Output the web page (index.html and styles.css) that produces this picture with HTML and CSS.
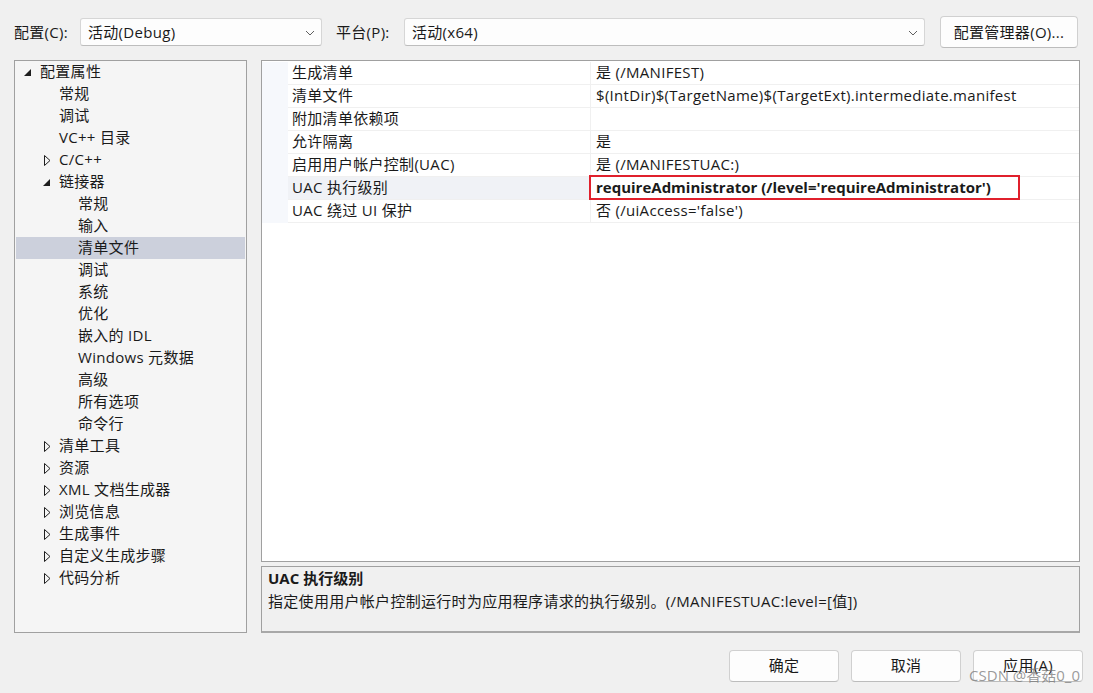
FILE: index.html
```html
<!DOCTYPE html>
<html lang="zh-CN">
<head>
<meta charset="utf-8">
<title>属性页</title>
<link rel="stylesheet" href="styles.css">
</head>
<body>
<div class="dialog">
  <div class="topbar">
    <span class="lbl lbl1">配置(C):</span>
    <div class="combo combo1"><span>活动(Debug)</span><svg class="chev" width="10" height="6" viewBox="0 0 10 6"><polyline points="1,1 5,5 9,1" fill="none" stroke="#606060" stroke-width="1"/></svg></div>
    <span class="lbl lbl2">平台(P):</span>
    <div class="combo combo2"><span>活动(x64)</span><svg class="chev" width="10" height="6" viewBox="0 0 10 6"><polyline points="1,1 5,5 9,1" fill="none" stroke="#606060" stroke-width="1"/></svg></div>
    <button class="btn mgr">配置管理器(O)...</button>
  </div>

  <div class="main">
    <div class="tree">
      <div class="node l0"><span class="tw"><svg width="16" height="22" viewBox="0 0 16 22"><polygon points="0,15 7,15 7,8" fill="#1e1e1e"/></svg></span>配置属性</div>
      <div class="node l1"><span class="tw"></span>常规</div>
      <div class="node l1"><span class="tw"></span>调试</div>
      <div class="node l1"><span class="tw"></span>VC++ 目录</div>
      <div class="node l1"><span class="tw"><svg width="16" height="22" viewBox="0 0 16 22"><polygon points="1.5,6.5 7,11.5 1.5,16.5" fill="none" stroke="#1e1e1e" stroke-width="1"/></svg></span>C/C++</div>
      <div class="node l1"><span class="tw"><svg width="16" height="22" viewBox="0 0 16 22"><polygon points="0,15 7,15 7,8" fill="#1e1e1e"/></svg></span>链接器</div>
      <div class="node l2"><span class="tw"></span>常规</div>
      <div class="node l2"><span class="tw"></span>输入</div>
      <div class="node l2 sel"><span class="tw"></span>清单文件</div>
      <div class="node l2"><span class="tw"></span>调试</div>
      <div class="node l2"><span class="tw"></span>系统</div>
      <div class="node l2"><span class="tw"></span>优化</div>
      <div class="node l2"><span class="tw"></span>嵌入的 IDL</div>
      <div class="node l2"><span class="tw"></span>Windows 元数据</div>
      <div class="node l2"><span class="tw"></span>高级</div>
      <div class="node l2"><span class="tw"></span>所有选项</div>
      <div class="node l2"><span class="tw"></span>命令行</div>
      <div class="node l1"><span class="tw"><svg width="16" height="22" viewBox="0 0 16 22"><polygon points="1.5,6.5 7,11.5 1.5,16.5" fill="none" stroke="#1e1e1e" stroke-width="1"/></svg></span>清单工具</div>
      <div class="node l1"><span class="tw"><svg width="16" height="22" viewBox="0 0 16 22"><polygon points="1.5,6.5 7,11.5 1.5,16.5" fill="none" stroke="#1e1e1e" stroke-width="1"/></svg></span>资源</div>
      <div class="node l1"><span class="tw"><svg width="16" height="22" viewBox="0 0 16 22"><polygon points="1.5,6.5 7,11.5 1.5,16.5" fill="none" stroke="#1e1e1e" stroke-width="1"/></svg></span>XML 文档生成器</div>
      <div class="node l1"><span class="tw"><svg width="16" height="22" viewBox="0 0 16 22"><polygon points="1.5,6.5 7,11.5 1.5,16.5" fill="none" stroke="#1e1e1e" stroke-width="1"/></svg></span>浏览信息</div>
      <div class="node l1"><span class="tw"><svg width="16" height="22" viewBox="0 0 16 22"><polygon points="1.5,6.5 7,11.5 1.5,16.5" fill="none" stroke="#1e1e1e" stroke-width="1"/></svg></span>生成事件</div>
      <div class="node l1"><span class="tw"><svg width="16" height="22" viewBox="0 0 16 22"><polygon points="1.5,6.5 7,11.5 1.5,16.5" fill="none" stroke="#1e1e1e" stroke-width="1"/></svg></span>自定义生成步骤</div>
      <div class="node l1"><span class="tw"><svg width="16" height="22" viewBox="0 0 16 22"><polygon points="1.5,6.5 7,11.5 1.5,16.5" fill="none" stroke="#1e1e1e" stroke-width="1"/></svg></span>代码分析</div>
    </div>

    <div class="right">
      <div class="grid">
        <div class="prow"><div class="gut"></div><div class="pname">生成清单</div><div class="pval">是 (/MANIFEST)</div></div>
        <div class="prow"><div class="gut"></div><div class="pname">清单文件</div><div class="pval">$(IntDir)$(TargetName)$(TargetExt).intermediate.manifest</div></div>
        <div class="prow"><div class="gut"></div><div class="pname">附加清单依赖项</div><div class="pval"></div></div>
        <div class="prow"><div class="gut"></div><div class="pname">允许隔离</div><div class="pval">是</div></div>
        <div class="prow"><div class="gut"></div><div class="pname">启用用户帐户控制(UAC)</div><div class="pval">是 (/MANIFESTUAC:)</div></div>
        <div class="prow cur"><div class="gut"></div><div class="pname">UAC 执行级别</div><div class="pval bold">requireAdministrator (/level='requireAdministrator')<span class="redbox"></span></div></div>
        <div class="prow"><div class="gut"></div><div class="pname">UAC 绕过 UI 保护</div><div class="pval">否 (/uiAccess='false')</div></div>
      </div>
      <div class="desc">
        <div class="dtitle">UAC 执行级别</div>
        <div class="dtext">指定使用用户帐户控制运行时为应用程序请求的执行级别。(/MANIFESTUAC:level=[值])</div>
      </div>
    </div>
  </div>

  <div class="footer">
    <button class="btn fbtn">确定</button>
    <button class="btn fbtn">取消</button>
    <button class="btn fbtn">应用(A)</button>
  </div>
  <div class="watermark">CSDN @香菇0_0</div>
</div>
</body>
</html>
```

FILE: styles.css
```css
html, body {
  margin: 0;
  padding: 0;
  background: #f0f0f0;
}
body {
  font-family: "Open Sans", "Noto Sans CJK SC", sans-serif;
  font-size: 15px;
  letter-spacing: 0.3px;
  color: #1a1a1a;
}
.dialog {
  position: relative;
  width: 1093px;
  height: 693px;
  overflow: hidden;
}
.topbar {
  display: flex;
  align-items: center;
  height: 32px;
  padding: 16px 0 0 14px;
}
.lbl { white-space: nowrap; padding-bottom: 2px; }
.lbl1 { width: 66px; }
.lbl2 { width: 68px; margin-left: 14px; }
.combo {
  box-sizing: border-box;
  height: 28px;
  display: flex;
  align-items: center;
  justify-content: space-between;
  padding: 0 6px 2px 7px;
  background: #fdfdfd;
  border: 1px solid #d6d6d6;
  border-bottom-color: #bdbdbd;
  border-radius: 3px;
}
.combo1 { width: 242px; }
.combo2 { width: 521px; }
.chev { margin-top: 3px; }
.btn {
  font: inherit;
  letter-spacing: inherit;
  color: #1a1a1a;
  box-sizing: border-box;
  height: 32px;
  background: #fdfdfd;
  border: 1px solid #d0d0d0;
  border-bottom-color: #bcbcbc;
  border-radius: 4px;
  padding: 0 0 3px 0;
}
.mgr { width: 138px; margin-left: 15px; padding-bottom: 2px; }

.main {
  display: flex;
  gap: 14px;
  margin: 12px 0 0 14px;
  height: 573px;
}
.tree {
  box-sizing: border-box;
  width: 233px;
  height: 573px;
  background: #f5f5f5;
  border: 1px solid #a0a0a0;
  padding: 0 1px;
}
.node {
  height: 22px;
  line-height: 20px;
  display: flex;
  align-items: flex-start;
  white-space: nowrap;
}
.tw {
  width: 16px;
  height: 22px;
  flex: none;
  display: block;
}
.tw svg { display: block; }
.l0 { padding-left: 8px; }
.l1 { padding-left: 27px; }
.l2 { padding-left: 46px; }
.sel { background: #ccd0dc; }

.right {
  display: flex;
  flex-direction: column;
  gap: 4px;
  width: 819px;
}
.grid {
  box-sizing: border-box;
  height: 502px;
  background: #fff;
  border: 1px solid #a0a0a0;
  padding-top: 1px;
}
.prow {
  display: grid;
  grid-template-columns: 26px 303px 1fr;
  height: 23px;
}
.gut { background: #f6f8fc; }
.pname, .pval {
  box-sizing: border-box;
  line-height: 20px;
  border-bottom: 1px solid #f0f0f0;
  white-space: nowrap;
}
.pname { padding-left: 4px; border-right: 1px solid #f0f0f0; }
.pval { padding-left: 5px; position: relative; }
.cur .pname { background: #f0f2f6; }
.bold { font-weight: bold; letter-spacing: 0; }
.redbox {
  position: absolute;
  left: -2px;
  top: -2px;
  width: 431px;
  height: 25px;
  box-sizing: border-box;
  border: 2px solid #e0202c;
}
.desc {
  box-sizing: border-box;
  height: 67px;
  background: #f0f0f0;
  border: 1px solid #a0a0a0;
  border-bottom: 2px solid #a8a8a8;
  padding: 0 0 0 6px;
}
.dtitle { font-weight: bold; letter-spacing: 0; line-height: 22px; }
.dtext { line-height: 24px; }

.footer {
  display: flex;
  justify-content: flex-end;
  gap: 12px;
  margin-top: 17px;
  padding-right: 10px;
}
.fbtn { width: 110px; }
.watermark {
  position: absolute;
  right: 13px;
  bottom: 8px;
  color: rgba(120, 120, 120, 0.75);
  font-size: 15px;
  letter-spacing: 0;
  pointer-events: none;
}
```
